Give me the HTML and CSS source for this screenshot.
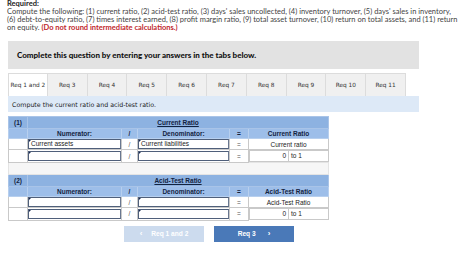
FILE: index.html
```html
<!DOCTYPE html>
<html>
<head>
<meta charset="utf-8">
<link rel="stylesheet" href="styles.css">
</head>
<body>
<div class="required">
  <div class="req-title">Required:</div>
  <div class="req-text">Compute the following: (1) current ratio, (2) acid-test ratio, (3) days' sales uncollected, (4) inventory turnover, (5) days' sales in inventory,<br>(6) debt-to-equity ratio, (7) times interest earned, (8) profit margin ratio, (9) total asset turnover, (10) return on total assets, and (11) return<br>on equity. <span class="warn">(Do not round intermediate calculations.)</span></div>
</div>
<div class="question">
  <div class="banner">Complete this question by entering your answers in the tabs below.</div>
  <div class="tabs">
    <div class="tab active">Req 1 and 2</div>
    <div class="tab">Req 3</div>
    <div class="tab">Req 4</div>
    <div class="tab">Req 5</div>
    <div class="tab">Req 6</div>
    <div class="tab">Req 7</div>
    <div class="tab">Req 8</div>
    <div class="tab">Req 9</div>
    <div class="tab">Req 10</div>
    <div class="tab">Req 11</div>
  </div>
  <div class="instr">Compute the current ratio and acid-test ratio.</div>
  <table class="ratio">
    <colgroup>
      <col class="c-num"><col class="c-in"><col class="c-op"><col class="c-in2"><col class="c-eq"><col class="c-res">
    </colgroup>
    <tr class="hd">
      <td class="lbl">(1)</td>
      <td colspan="5" class="title"><u>Current Ratio</u></td>
    </tr>
    <tr class="sub">
      <td></td>
      <td>Numerator:</td>
      <td>/</td>
      <td>Denominator:</td>
      <td>=</td>
      <td>Current Ratio</td>
    </tr>
    <tr class="row">
      <td></td>
      <td class="inp"><div class="field">Current assets</div></td>
      <td class="op">/</td>
      <td class="inp"><div class="field">Current liabilities</div></td>
      <td class="op">=</td>
      <td class="res">Current ratio</td>
    </tr>
    <tr class="row">
      <td></td>
      <td class="inp"><div class="field"></div></td>
      <td class="op">/</td>
      <td class="inp"><div class="field"></div></td>
      <td class="op">=</td>
      <td class="res split"><span class="val">0</span><span class="unit">to 1</span></td>
    </tr>
    <tr class="gap"><td colspan="6"></td></tr>
    <tr class="hd">
      <td class="lbl">(2)</td>
      <td colspan="5" class="title"><u>Acid-Test Ratio</u></td>
    </tr>
    <tr class="sub">
      <td></td>
      <td>Numerator:</td>
      <td>/</td>
      <td>Denominator:</td>
      <td>=</td>
      <td>Acid-Test Ratio</td>
    </tr>
    <tr class="row">
      <td></td>
      <td class="inp"><div class="field"></div></td>
      <td class="op">/</td>
      <td class="inp"><div class="field"></div></td>
      <td class="op">=</td>
      <td class="res">Acid-Test Ratio</td>
    </tr>
    <tr class="row">
      <td></td>
      <td class="inp"><div class="field"></div></td>
      <td class="op">/</td>
      <td class="inp"><div class="field"></div></td>
      <td class="op">=</td>
      <td class="res split"><span class="val">0</span><span class="unit">to 1</span></td>
    </tr>
  </table>
  <div class="nav">
    <div class="btn prev"><span class="chev">&lsaquo;</span>Req 1 and 2</div>
    <div class="btn next">Req 3<span class="chev">&rsaquo;</span></div>
  </div>
</div>
</body>
</html>
```

FILE: styles.css
```css
html, body {
  margin: 0;
  padding: 0;
  background: #ffffff;
}
body {
  padding: 0 0 0 7px;
  font-family: Lato, "Liberation Sans", sans-serif;
  color: #333;
}
.required {
  font-size: 7.5px;
  line-height: 8px;
  white-space: nowrap;
}
.req-title {
  font-weight: bold;
  color: #222;
}
.req-text {
  color: #444;
}
.warn {
  color: #c0272d;
  font-weight: bold;
}
.question {
  margin-top: 9px;
  margin-left: 1px;
  width: 411px;
}
.banner {
  background: #e2e2e2;
  height: 28px;
  display: flex;
  align-items: center;
  padding-left: 9px;
  font-size: 8px;
  font-weight: 900;
  color: #111;
}
.tabs {
  display: flex;
  margin-top: 4px;
  height: 23px;
}
.tab {
  width: 39.8px;
  box-sizing: border-box;
  background: #f0f0f0;
  border: 1px solid #dcdcdc;
  border-bottom: none;
  border-left: none;
  display: flex;
  align-items: center;
  justify-content: center;
  font-family: "DejaVu Sans", Verdana, sans-serif;
  font-size: 5.8px;
  color: #333;
}
.tab.active {
  background: #ffffff;
  border-left: 1px solid #dcdcdc;
}
.instr {
  background: #dde9f7;
  height: 16px;
  display: flex;
  align-items: center;
  padding-left: 4px;
  font-family: "DejaVu Sans", Verdana, sans-serif;
  font-size: 6.3px;
  color: #222;
}
.ratio {
  margin-top: 4px;
  border-collapse: collapse;
  table-layout: fixed;
  width: 320px;
  font-family: "Liberation Sans", Arial, sans-serif;
  font-size: 6.5px;
  color: #222;
}
.c-num { width: 19px; }
.c-in { width: 94px; }
.c-op { width: 16px; }
.c-in2 { width: 92px; }
.c-eq { width: 19px; }
.c-res { width: 80px; }
.ratio td {
  padding: 0;
  border: 1px solid #c9c9c9;
  text-align: center;
}
.hd td {
  background: #8db2e1;
  height: 11px;
  border: 1px solid #a9c4e8;
  font-weight: bold;
  color: #13233f;
}
.hd .title {
  text-align: center;
}
.sub td {
  background: #9dbee9;
  height: 9px;
  border: 1px solid #b7cfee;
  font-weight: bold;
  color: #13233f;
}
.row td {
  height: 10px;
  background: #fff;
}
.row td.op {
  color: #555;
}
.row td.inp {
  padding: 0;
}
.field {
  position: relative;
  height: 10px;
  box-sizing: border-box;
  border: 1px solid #4f5f7a;
  border-right-color: #6a7890;
  text-align: left;
  padding-left: 2px;
  line-height: 8px;
  color: #222;
}
.field::before {
  content: "";
  position: absolute;
  left: 0;
  top: 0;
  border-top: 2px solid #1a2a50;
  border-right: 2px solid transparent;
}
.res.split {
  display: flex;
  height: 10px;
  border-bottom: 1px solid #c9c9c9;
}
.res.split .val {
  width: 36px;
  text-align: right;
  padding-right: 2px;
  border-right: 1px solid #c9c9c9;
  line-height: 10px;
}
.res.split .unit {
  padding-left: 2px;
  text-align: left;
  line-height: 10px;
}
.gap td {
  height: 11px;
  background: #f6f6f6;
  border: 1px solid #e4e4e4;
}
.nav {
  display: flex;
  gap: 10px;
  margin: 5px 0 0 116px;
}
.btn {
  width: 80px;
  height: 16px;
  display: flex;
  align-items: center;
  justify-content: center;
  font-family: "Liberation Sans", Arial, sans-serif;
  font-weight: bold;
  font-size: 6.6px;
  color: #fff;
}
.btn.prev {
  background: #ccdbee;
}
.btn.next {
  background: #4a79b8;
}
.prev .chev {
  margin-right: 9px;
  font-size: 8px;
}
.next .chev {
  margin-left: 12px;
  font-size: 8px;
}
```
